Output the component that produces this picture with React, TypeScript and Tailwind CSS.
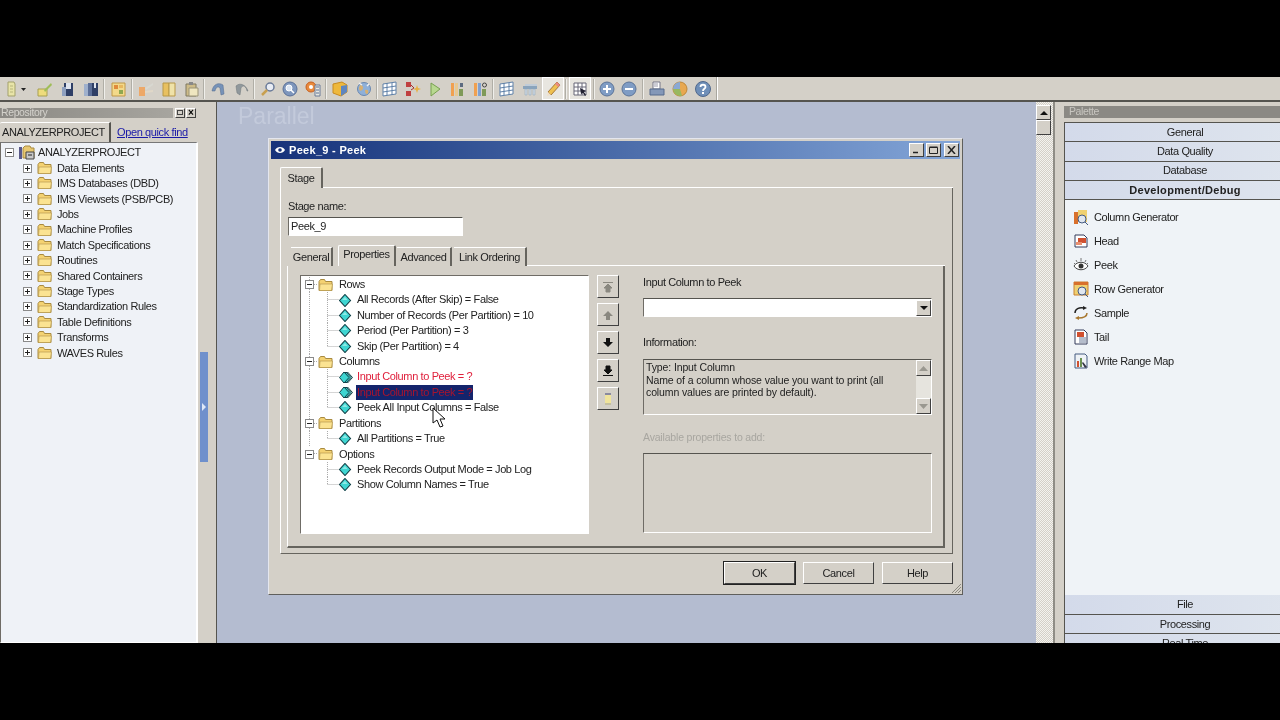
import type { ReactNode } from 'react';

const raised = 'border border-t-white border-l-white border-b-[#404040] border-r-[#404040]';
const sunken = 'border border-t-[#6f6c66] border-l-[#6f6c66] border-b-white border-r-white';

function Svg({ children, w = 16, h = 16 }: { children: ReactNode; w?: number; h?: number }) {
  return (
    <svg width={w} height={h} viewBox={`0 0 ${w} ${h}`} className="shrink-0">
      {children}
    </svg>
  );
}

// toolbar icons, all 16x16
const icons: Record<string, ReactNode> = {
  doc: (
    <>
      <path d="M5 1h6l1 2v12H5z" fill="#e8e4a8" stroke="#a3a16c" />
      <path d="M7 5h3M7 8h3M7 11h3" stroke="#b8b67c" />
    </>
  ),
  arrow: <path d="M1 7h5l-2.500 3z" fill="#222" />,
  pen: (
    <>
      <path d="M1 8h9v7H1z" fill="#eedc7c" stroke="#a8a050" />
      <path d="M7 9l7-7 1 2-7 7z" fill="#9fbd58" />
    </>
  ),
  save: (
    <>
      <path d="M4 2h9v13H4z" fill="#2f3f66" />
      <path d="M6 2h5v6H6z" fill="#dfe4ee" />
      <path d="M2 6h4v9H2z" fill="#8ea0c0" />
    </>
  ),
  saveall: (
    <>
      <path d="M1 3h5v12H1z" fill="#9fb0cc" />
      <path d="M5 2h4v13H5z" fill="#5c6f98" />
      <path d="M9 2h6v13H9z" fill="#2f3f66" />
      <path d="M11 2h2v5h-2z" fill="#dfe4ee" />
    </>
  ),
  grid: (
    <>
      <path d="M2 2h13v13H2z" fill="#f3d98a" stroke="#c09848" />
      <path d="M4 4h4v4H4z" fill="#e08a3c" />
      <path d="M9 9h4v4H9z" fill="#8fa850" />
      <path d="M9 4h4v3H9z" fill="#e8b860" />
    </>
  ),
  cut: (
    <>
      <path d="M1 6h6v9H1z" fill="#eda868" />
      <path d="M7 7l8-5v2l-7 5z" fill="#d8d8d0" />
      <path d="M7 10l8-1v2l-8 1z" fill="#e0d8c8" />
    </>
  ),
  copy: (
    <>
      <path d="M2 2h6v13H2z" fill="#e8c060" stroke="#b89848" />
      <path d="M8 2h6v13H8z" fill="#efe2a8" stroke="#b89848" />
    </>
  ),
  paste: (
    <>
      <path d="M3 3h10v12H3z" fill="#cdbb88" stroke="#7f7860" />
      <path d="M6 1h4v3H6z" fill="#888" />
      <path d="M6 7h9v8H6z" fill="#efe6c0" stroke="#9b9478" />
    </>
  ),
  undo: <path d="M2 10C3 3 9 1 13 4l1 9-3 1-1-7C8 5 6 6 5 10z" fill="#7692b8" stroke="#50688c" strokeWidth="0.500" />,
  redo: <path d="M14 10C13 4 9 4 8 7l-1 7-3-2-1-7c4-4 10-1 12 5z" fill="#90989c" stroke="#6c7478" strokeWidth="0.500" />,
  find: (
    <>
      <circle cx="10" cy="6" r="4" fill="#e8ecf4" stroke="#6a7a98" strokeWidth="1.500" />
      <path d="M7 9l-5 5" stroke="#c8a050" strokeWidth="2.500" />
    </>
  ),
  search: (
    <>
      <circle cx="8" cy="8" r="7" fill="#7e96bc" stroke="#5a7098" />
      <circle cx="7" cy="7" r="3" fill="#dce6f4" stroke="#fff" />
      <path d="M9 9l3 3" stroke="#fff" strokeWidth="1.500" />
    </>
  ),
  run: (
    <>
      <circle cx="6" cy="6" r="5" fill="#e88a3c" stroke="#c86020" />
      <circle cx="6" cy="6" r="2" fill="#fff" />
      <path d="M10 4h5v11h-5z" fill="#e8e8e0" stroke="#6a7a98" />
      <path d="M11 6h3M11 9h3M11 12h3" stroke="#5a7098" />
    </>
  ),
  folderbook: (
    <>
      <path d="M1 3l9-2 5 3v7l-6 4-8-3z" fill="#eeb83c" stroke="#c88a20" />
      <path d="M9 5l6-1v7l-6 4z" fill="#5e86c0" />
    </>
  ),
  globe: (
    <>
      <circle cx="8" cy="8" r="6.500" fill="#8fb0d8" stroke="#6a88b0" />
      <path d="M4 4c3 0 4 3 2 5s-3 0-3-2zM9 9c3-1 4 1 3 3s-3 1-3-3z" fill="#d8b070" />
      <path d="M3 2l3 2M13 3l-2 2" stroke="#f0f0f0" strokeWidth="1.500" />
    </>
  ),
  flow: (
    <>
      <path d="M1 1h5v5H1zM1 10h5v5H1z" fill="#c04040" />
      <path d="M6 4l3 3-3 2" stroke="#a03030" fill="none" />
      <path d="M12 4l1 3 3 1-3 1-1 3-1-3-3-1 3-1z" fill="#e8b040" />
    </>
  ),
  play: <path d="M4 2l9 6-9 7z" fill="#b8d890" stroke="#78a050" />,
  book1: (
    <>
      <path d="M2 2h3v13H2z" fill="#f0a050" />
      <path d="M6 2h3v13H6z" fill="#e8c890" />
      <path d="M10 8h4v7h-4z" fill="#7f9a58" />
      <path d="M11 2h3v4h-3z" fill="#5c6a80" />
    </>
  ),
  book2: (
    <>
      <path d="M2 2h3v13H2z" fill="#f0a050" />
      <path d="M6 2h3v13H6z" fill="#80a0d0" />
      <path d="M10 8h4v7h-4z" fill="#7f9a58" />
      <circle cx="12.500" cy="4" r="2" fill="none" stroke="#444" />
    </>
  ),
  tablegrid: (
    <>
      <path d="M1 3l13-2v12L1 15z" fill="#fff" stroke="#5e80a8" />
      <path d="M1 7l13-2M1 11l13-2M5 2v12M10 2v12" stroke="#5e80a8" />
    </>
  ),
  rows: (
    <>
      <path d="M1 5h14v3H1z" fill="#8aa4bc" />
      <path d="M3 8h2v6H3zM7 8h2v6H7zM11 8h2v6h-2z" fill="#d0d8e0" stroke="#8aa4bc" strokeWidth="0.500" />
      <path d="M3 3h12v2H3z" fill="#c0ccd8" />
    </>
  ),
  pencil: (
    <>
      <path d="M12 1l3 3-9 10-3-3z" fill="#eec050" stroke="#a87838" />
      <path d="M12 1l3 3-2 2-3-3z" fill="#ea8a80" />
      <path d="M3 11l3 3-4 1z" fill="#f0e0c8" />
    </>
  ),
  select: (
    <>
      <path d="M2 2h12v12H2z" fill="#fff" stroke="#667" />
      <path d="M2 6h12M2 10h12M6 2v12M10 2v12" stroke="#667" />
      <path d="M8 7l6 3-2 1 2 3-1 1-2-3-2 1z" fill="#223" />
    </>
  ),
  plus: (
    <>
      <circle cx="8" cy="8" r="7" fill="#7f9cc4" stroke="#5c7498" />
      <path d="M4 8h8M8 4v8" stroke="#fff" strokeWidth="2" />
    </>
  ),
  minus: (
    <>
      <circle cx="8" cy="8" r="7" fill="#7f9cc4" stroke="#5c7498" />
      <path d="M4 8h8" stroke="#fff" strokeWidth="2" />
    </>
  ),
  print: (
    <>
      <path d="M4 1h7v7H4z" fill="#fff" stroke="#778" />
      <path d="M1 8h14v6H1z" fill="#8498b8" stroke="#566a8c" />
      <path d="M5 3h4M5 5h4" stroke="#99a" />
    </>
  ),
  pie: (
    <>
      <circle cx="8" cy="8" r="7" fill="#e8a850" stroke="#c08838" />
      <path d="M8 8V1a7 7 0 0 0-7 7z" fill="#8aa8d4" />
      <path d="M8 8H1a7 7 0 0 0 9 6.700z" fill="#98b860" />
    </>
  ),
  help: (
    <>
      <circle cx="8" cy="8" r="7.500" fill="#6f8fb8" stroke="#50688c" />
      <path d="M5.500 6c0-3 5-3 5 0 0 2-2.500 1.500-2.500 4" stroke="#fff" strokeWidth="1.800" fill="none" />
      <path d="M7 11h2v2H7z" fill="#fff" />
    </>
  ),
};

const tools: { icon?: string; w: string; pressed?: boolean }[] = [
  { icon: 'doc', w: 'w-[22px]' },
  { icon: 'arrow', w: 'w-[12px]' },
  { icon: 'pen', w: 'w-[22px]' },
  { icon: 'save', w: 'w-[23px]' },
  { icon: 'saveall', w: 'w-[23px]' },
  { w: 'w-[4px]' },
  { icon: 'grid', w: 'w-[24px]' },
  { w: 'w-[4px]' },
  { icon: 'cut', w: 'w-[24px]' },
  { icon: 'copy', w: 'w-[22px]' },
  { icon: 'paste', w: 'w-[22px]' },
  { w: 'w-[4px]' },
  { icon: 'undo', w: 'w-[24px]' },
  { icon: 'redo', w: 'w-[22px]' },
  { w: 'w-[4px]' },
  { icon: 'find', w: 'w-[23px]' },
  { icon: 'search', w: 'w-[22px]' },
  { icon: 'run', w: 'w-[23px]' },
  { w: 'w-[4px]' },
  { icon: 'folderbook', w: 'w-[24px]' },
  { icon: 'globe', w: 'w-[23px]' },
  { w: 'w-[4px]' },
  { icon: 'tablegrid', w: 'w-[22px]' },
  { icon: 'flow', w: 'w-[23px]' },
  { icon: 'play', w: 'w-[22px]' },
  { icon: 'book1', w: 'w-[22px]' },
  { icon: 'book2', w: 'w-[23px]' },
  { w: 'w-[4px]' },
  { icon: 'tablegrid', w: 'w-[23px]' },
  { icon: 'rows', w: 'w-[23px]' },
  { icon: 'pencil', w: 'w-[23px]', pressed: true },
  { w: 'w-[4px]' },
  { icon: 'select', w: 'w-[24px]', pressed: true },
  { w: 'w-[4px]' },
  { icon: 'plus', w: 'w-[22px]' },
  { icon: 'minus', w: 'w-[22px]' },
  { w: 'w-[5px]' },
  { icon: 'print', w: 'w-[23px]' },
  { icon: 'pie', w: 'w-[23px]' },
  { icon: 'help', w: 'w-[23px]' },
];

function Toolbar() {
  return (
    <div className="flex h-[25px] shrink-0 items-center border-b-2 border-b-[#55544f] bg-[#d4d0c8]">
      {tools.map((t, i) => (
        <div key={i} className={`flex h-[23px] shrink-0 items-center justify-center ${t.w}`}>
          {t.icon ? (
            <div
              className={
                t.pressed
                  ? 'flex h-[23px] w-[22px] items-center justify-center border border-white bg-[#e8e6e0]'
                  : 'flex items-center justify-center'
              }
            >
              <Svg>{icons[t.icon]}</Svg>
            </div>
          ) : (
            <div className="h-[20px] w-[2px] border-l border-l-[#b0aea6] border-r border-r-[#f0efeb]" />
          )}
        </div>
      ))}
      <div className="ml-[2px] h-[23px] w-[2px] border-r border-r-white bg-[#a8a69e]" />
    </div>
  );
}

function Folder() {
  return (
    <Svg w={16} h={14}>
      <path d="M1 3.500 2.500 1.500h4l1 2H14v9H1z" fill="#f4d272" stroke="#a88a40" />
      <path d="M2 6h12.500l-1 6.500H1.500z" fill="#fbe392" stroke="#b89a50" strokeWidth="0.700" />
    </Svg>
  );
}

function Expander({ open }: { open?: boolean }) {
  return (
    <svg width="9" height="9" viewBox="0 0 9 9" className="shrink-0">
      <rect x="0.500" y="0.500" width="8" height="8" fill="#fff" stroke="#8a8a8a" />
      <path d="M2 4.500h5" stroke="#222" />
      {!open && <path d="M4.500 2v5" stroke="#222" />}
    </svg>
  );
}

const repoItems = [
  'Data Elements',
  'IMS Databases (DBD)',
  'IMS Viewsets (PSB/PCB)',
  'Jobs',
  'Machine Profiles',
  'Match Specifications',
  'Routines',
  'Shared Containers',
  'Stage Types',
  'Standardization Rules',
  'Table Definitions',
  'Transforms',
  'WAVES Rules',
];

function RepositoryPanel() {
  return (
    <div className="flex w-[198px] shrink-0 flex-col pt-[5px]">
      <div className="flex h-[11px] items-center pr-[2px]">
        <div className="flex h-[10px] w-[184px] items-center bg-gradient-to-r from-[#8b8984] to-[#a7a59f] pl-[1px] text-[10.500px] text-[#d4d2cc]">
          Repository
        </div>
        <div className={`ml-[2px] flex h-[10px] w-[10px] items-center justify-center bg-[#d4d0c8] ${raised}`}>
          <div className="h-[5px] w-[6px] border border-[#444]" />
        </div>
        <div className={`ml-[1px] flex h-[10px] w-[11px] items-center justify-center bg-[#d4d0c8] text-[10px] font-bold leading-none text-black ${raised}`}>
          ×
        </div>
      </div>
      <div className="mt-[3px] flex h-[21px] items-end">
        <div className="flex h-[20px] w-[111px] items-center rounded-tl-[2px] border-t border-t-white border-r-2 border-r-[#55544f] pl-[2px] text-[#222]">
          ANALYZERPROJECT
        </div>
        <a className="ml-[6px] pb-[2px] text-[#1a1aa8] underline">Open quick find</a>
      </div>
      <div className={`flex-1 bg-[#eff2f7] pt-[2px] ${sunken} border-t-[#777] border-r-2 border-r-[#888]`}>
        <div className="flex h-[15.400px] items-center pl-[4px] text-[#222]">
          <Expander open />
          <div className="ml-[4px]">
            <Svg w={18} h={15}>
              <path d="M1 2h3v12H1z" fill="#5a5a8a" />
              <path d="M5 3 7 1h5l1 2h3v10H5z" fill="#e8c870" stroke="#a88a40" />
              <path d="M8 7h8v7H8z" fill="#c8c8c8" stroke="#444" />
              <path d="M10 10h4" stroke="#222" />
            </Svg>
          </div>
          <span className="ml-[2px]">ANALYZERPROJECT</span>
        </div>
        {repoItems.map((name) => (
          <div key={name} className="flex h-[15.400px] items-center pl-[22px] text-[#222]">
            <Expander />
            <div className="ml-[5px]">
              <Folder />
            </div>
            <span className="ml-[4px]">{name}</span>
          </div>
        ))}
      </div>
    </div>
  );
}

function Diamond({ multi }: { multi?: boolean }) {
  if (multi) {
    return (
      <Svg w={14} h={13}>
        <path d="M8.500 1l5 5.500-5 5.500-5-5.500z" fill="#eaffff" stroke="#0d3d44" />
        <path d="M7 1l5 5.500-5 5.500-5-5.500z" fill="#3fd6d2" stroke="#0d3d44" />
        <path d="M5 1l5 5.500-5 5.500-4.500-5.500z" fill="#3fd6d2" stroke="#0d3d44" />
      </Svg>
    );
  }
  return (
    <Svg w={14} h={13}>
      <path d="M6 .5l5.500 6L6 12.500.5 6.500z" fill="#3fd6d2" stroke="#0d3d44" strokeWidth="1.100" />
      <path d="M3 6 6 3l2.500 3z" fill="#8eeae6" />
    </Svg>
  );
}

type PropRow = { label: string; group?: boolean; red?: boolean; selected?: boolean; multi?: boolean; last?: boolean };

const propRows: PropRow[] = [
  { label: 'Rows', group: true },
  { label: 'All Records (After Skip) = False' },
  { label: 'Number of Records (Per Partition) = 10' },
  { label: 'Period (Per Partition) = 3' },
  { label: 'Skip (Per Partition) = 4', last: true },
  { label: 'Columns', group: true },
  { label: 'Input Column to Peek = ?', red: true, multi: true },
  { label: 'Input Column to Peek = ?', red: true, multi: true, selected: true },
  { label: 'Peek All Input Columns = False', last: true },
  { label: 'Partitions', group: true },
  { label: 'All Partitions = True', last: true },
  { label: 'Options', group: true },
  { label: 'Peek Records Output Mode = Job Log' },
  { label: 'Show Column Names = True', last: true },
];

// gutter with the dotted tree lines for one property row
function Gutter({ row, index }: { row: PropRow; index: number }) {
  const trunk = index < propRows.length - 3;
  return (
    <svg width="38" height="15.400" viewBox="0 0 38 15.400" className="absolute left-0 top-0">
      {trunk && <path d="M8.500 0v16" stroke="#aaa" strokeDasharray="1 1" />}
      {row.group && <path d="M13 7.500h4" stroke="#aaa" strokeDasharray="1 1" />}
      {!row.group && (
        <>
          <path d={row.last ? 'M26.500 0v7.500' : 'M26.500 0v16'} stroke="#aaa" strokeDasharray="1 1" />
          <path d="M26.500 7.500h11" stroke="#aaa" strokeDasharray="1 1" />
        </>
      )}
    </svg>
  );
}

function PropertyTree() {
  return (
    <div className={`relative h-[259px] w-[289px] shrink-0 bg-white pt-[1px] ${sunken}`}>
      {propRows.map((row, i) => (
        <div key={i} className="relative flex h-[15.400px] items-center pl-[4px]">
          <Gutter row={row} index={i} />
          {row.group ? (
            <div className="relative flex items-center">
              <Expander open />
              <div className="ml-[4px]">
                <Folder />
              </div>
              <span className="ml-[5px] text-[#222]">{row.label}</span>
            </div>
          ) : (
            <div className="relative ml-[34px] flex items-center">
              <Diamond multi={row.multi} />
              <span
                className={`ml-[3px] pl-[1px] pr-[1px] leading-[15.400px] ${
                  row.selected ? 'bg-[#14246c] text-[#a8142e]' : row.red ? 'text-[#e0203c]' : 'text-[#222]'
                }`}
              >
                {row.label}
              </span>
            </div>
          )}
        </div>
      ))}
    </div>
  );
}

function MoveButton({ kind }: { kind: string }) {
  const dark = kind === 'down' || kind === 'bottom';
  const fill = dark ? '#111' : '#8a8880';
  return (
    <div className={`flex h-[23px] w-[22px] items-center justify-center bg-[#d4d0c8] ${raised} border-b-[#777] border-r-[#777]`}>
      <Svg w={12} h={12}>
        {kind === 'top' && <path d="M1 1.500h10M6 3l4 4H8v4H4V7H2z" stroke={fill} fill={fill} />}
        {kind === 'up' && <path d="M6 2l5 5H8v4H4V7H1z" fill={fill} />}
        {kind === 'down' && <path d="M6 10 1 5h3V1h4v4h3z" fill={fill} />}
        {kind === 'bottom' && <path d="M6 9 2 5h2V1h4v4h2zM1 10.500h10" stroke={fill} fill={fill} />}
        {kind === 'new' && (
          <>
            <path d="M3 0h6v2H3z" fill="#8a8aa0" />
            <path d="M3 2h6v8H3z" fill="#f0e49c" />
            <path d="M3 10h6v2H3z" fill="#c4c0a0" />
          </>
        )}
      </Svg>
    </div>
  );
}

function ScrollArrow({ up }: { up?: boolean }) {
  return (
    <div className={`flex h-[16px] w-[15px] items-center justify-center bg-[#d4d0c8] ${raised} border-b-[#777] border-r-[#777]`}>
      <svg width="9" height="5" viewBox="0 0 9 5">
        <path d={up ? 'M4.500 0 9 5H0z' : 'M4.500 5 9 0H0z'} fill="#9a9890" />
      </svg>
    </div>
  );
}

function RightFields() {
  return (
    <div className="ml-[24px] flex w-[289px] shrink-0 flex-col">
      <div className="h-[14px] leading-[14px] text-[#222]">Input Column to Peek</div>
      <div className={`mt-[9px] flex h-[19px] items-center justify-end bg-white ${sunken} border-t-[#55544f]`}>
        <div className={`flex h-[16px] w-[15px] items-center justify-center bg-[#d4d0c8] ${raised}`}>
          <svg width="8" height="4" viewBox="0 0 8 4">
            <path d="M0 0h8L4 4z" fill="#111" />
          </svg>
        </div>
      </div>
      <div className="mt-[18px] h-[15px] leading-[15px] text-[#222]">Information:</div>
      <div className={`mt-[9px] flex h-[56px] bg-[#d4d0c8] ${sunken} border-t-[#55544f]`}>
        <div className="flex-1 pl-[2px] pt-[1px] text-[10.500px] leading-[12.500px] tracking-[-0.12px] text-[#222]">
          Type: Input Column
          <br />
          Name of a column whose value you want to print (all
          <br />
          column values are printed by default).
        </div>
        <div className="flex w-[15px] shrink-0 flex-col justify-between bg-[#e6e4de]">
          <ScrollArrow up />
          <ScrollArrow />
        </div>
      </div>
      <div className="mt-[15px] h-[15px] text-[10.500px] leading-[15px] tracking-[-0.18px] text-[#a8a6a0]">Available properties to add:</div>
      <div className={`mt-[8px] h-[80px] bg-[#d4d0c8] ${sunken} border-t-[#55544f]`} />
    </div>
  );
}

function TabLabel({ children, active, className }: { children: ReactNode; active?: boolean; className: string }) {
  return (
    <div
      className={`flex items-center justify-center border-r-2 border-r-[#66645e] text-[#222] ${className} ${
        active ? 'h-[21px] rounded-t-[2px] border-t border-l border-t-white border-l-white pb-[3px]' : 'h-[19px] border-t border-t-white'
      }`}
    >
      {children}
    </div>
  );
}

function DialogButton({ children, primary }: { children: ReactNode; primary?: boolean }) {
  return (
    <div
      className={`flex h-[22px] w-[71px] items-center justify-center bg-[#d4d0c8] text-[#222] ${raised} ${
        primary ? 'outline outline-1 outline-[#222]' : 'border-b-[#66645e] border-r-[#66645e]'
      }`}
    >
      {children}
    </div>
  );
}

function WindowButton({ kind }: { kind: string }) {
  return (
    <div className={`flex h-[14px] w-[15px] items-center justify-center bg-[#d4d0c8] ${raised} border-b-[#66645e] border-r-[#66645e]`}>
      <svg width="9" height="8" viewBox="0 0 9 8">
        {kind === 'min' && <path d="M1 6.500h5" stroke="#222" strokeWidth="1.500" />}
        {kind === 'max' && <path d="M.5 1.500h8v6h-8zM.5 1h8" stroke="#222" fill="none" />}
        {kind === 'close' && <path d="M1 0l7 8M8 0 1 8" stroke="#222" strokeWidth="1.500" />}
      </svg>
    </div>
  );
}

function PeekDialog() {
  return (
    <div className="absolute left-[51px] top-[36px] flex h-[457px] w-[695px] flex-col border border-t-[#e4e6ee] border-l-[#e4e6ee] border-b-[#5f5f5c] border-r-[#5f5f5c] bg-[#d4d0c8] p-[2px]">
      <div className="flex h-[18px] shrink-0 items-center bg-gradient-to-r from-[#17327a] to-[#84a6d8] pl-[3px] pr-[1px]">
        <svg width="12" height="10" viewBox="0 0 12 10" className="shrink-0">
          <path d="M1 5c2-4 8-4 10 0-2 4-8 4-10 0z" fill="#fff" />
          <circle cx="6" cy="5" r="1.800" fill="#17327a" />
        </svg>
        <span className="ml-[3px] font-bold tracking-[0.3px] text-white">Peek_9 - Peek</span>
        <div className="ml-auto flex">
          <WindowButton kind="min" />
          <div className="ml-[2px]">
            <WindowButton kind="max" />
          </div>
          <div className="ml-[3px]">
            <WindowButton kind="close" />
          </div>
        </div>
      </div>
      <div className="flex flex-1 flex-col bg-[#d4d0c8] pl-[9px] pr-[7px] pt-[8px]">
        <div className="flex h-[21px] shrink-0">
          <div className="flex h-[21px] w-[43px] items-center justify-center rounded-t-[2px] border-l border-t border-l-white border-t-white border-r-2 border-r-[#66645e] text-[#222]">
            Stage
          </div>
          <div className="flex-1 border-b border-b-white" />
        </div>
        <div className="flex h-[366px] shrink-0 flex-col border-b border-r border-l border-b-[#66645e] border-r-[#66645e] border-l-white pl-[6px] pr-[7px] pt-[11px]">
          <div className="h-[14px] pl-[1px] leading-[14px] text-[#222]">Stage name:</div>
          <div className={`ml-[1px] mt-[4px] flex h-[19px] w-[175px] items-center bg-white pl-[2px] text-[#222] ${sunken} border-t-[#55544f]`}>
            Peek_9
          </div>
          <div className="mt-[9px] flex h-[21px] shrink-0 items-end pl-[1px]">
            <div className="h-[19px] w-[3px]" />
            <TabLabel className="w-[42px]">General</TabLabel>
            <TabLabel active className="ml-[5px] w-[58px]">
              Properties
            </TabLabel>
            <TabLabel className="ml-[1px] w-[55px]">Advanced</TabLabel>
            <TabLabel className="ml-[2px] w-[73px]">Link Ordering</TabLabel>
            <div className="h-[1px] flex-1 bg-white" />
          </div>
          <div className="flex h-[282px] shrink-0 border-b-2 border-r-2 border-l border-b-[#66645e] border-r-[#66645e] border-l-white pl-[12px] pt-[9px]">
            <PropertyTree />
            <div className="ml-[8px] flex w-[22px] shrink-0 flex-col gap-[5px]">
              {['top', 'up', 'down', 'bottom', 'new'].map((k) => (
                <MoveButton key={k} kind={k} />
              ))}
            </div>
            <div>
              <RightFields />
            </div>
          </div>
        </div>
        <div className="mt-[8px] flex justify-end gap-[8px]">
          <DialogButton primary>OK</DialogButton>
          <DialogButton>Cancel</DialogButton>
          <DialogButton>Help</DialogButton>
        </div>
      </div>
      <svg width="11" height="11" viewBox="0 0 11 11" className="absolute bottom-0 right-0">
        <path d="M10 1 1 10M10 4 4 10M10 7l-3 3" stroke="#8a8880" />
      </svg>
      {/* mouse pointer over the tree */}
      <svg width="14" height="21" viewBox="0 0 14 21" className="absolute left-[163px] top-[268px]">
        <path d="M1 1v15l4-3 3 7 3-1-3-7h5z" fill="#fff" stroke="#111" />
      </svg>
    </div>
  );
}

function Splitter() {
  return (
    <div className="w-[19px] shrink-0 border-r border-r-[#55544f] pl-[2px] pt-[250px]">
      <div className="flex h-[110px] w-[8px] items-center justify-center bg-[#6f90cc]">
        <svg width="4" height="8" viewBox="0 0 4 8">
          <path d="M0 0l4 4-4 4z" fill="#dfe8f8" />
        </svg>
      </div>
    </div>
  );
}

function Canvas() {
  return (
    <div className="relative w-[819px] shrink-0 bg-[#b4bcd0]">
      <div className="pl-[21px] pt-[1px] text-[23px] leading-[26px] tracking-normal text-[#c3cadb]">Parallel</div>
      <PeekDialog />
    </div>
  );
}

function VerticalScroll() {
  return (
    <div className="w-[17px] shrink-0 bg-[repeating-conic-gradient(#d4d0c8_0_25%,#f4f3ef_0_50%)] bg-[length:2px_2px] pt-[3px]">
      <div className={`flex h-[15px] w-[15px] items-center justify-center bg-[#d4d0c8] ${raised} border-b-[#777] border-r-[#777]`}>
        <svg width="8" height="4" viewBox="0 0 8 4">
          <path d="M4 0l4 4H0z" fill="#111" />
        </svg>
      </div>
      <div className={`h-[15px] w-[15px] bg-[#d4d0c8] ${raised} border-b-[#777] border-r-[#777]`} />
    </div>
  );
}

const paletteIcons: Record<string, ReactNode> = {
  'Column Generator': (
    <>
      <path d="M1 3h4v12H1z" fill="#d8702c" />
      <path d="M5 1h9v12H5z" fill="#efd070" />
      <circle cx="9" cy="10" r="4" fill="#dfe6f0" stroke="#445a80" />
      <path d="M12 13l3 3" stroke="#445a80" />
    </>
  ),
  Head: (
    <>
      <path d="M2 2h9l3 3v9H2z" fill="#fff" stroke="#333a5a" />
      <path d="M5 5h8v5H5z" fill="#d05030" />
      <path d="M3 9h6v3H3z" fill="#e89070" />
    </>
  ),
  Peek: (
    <>
      <path d="M1 9c3-5 11-5 14 0-3 5-11 5-14 0z" fill="#fff" stroke="#444" />
      <circle cx="8" cy="9" r="2.500" fill="#333" />
      <path d="M3 3l1 2M8 1v3M13 3l-1 2M1 6l1 1M15 6l-1 1" stroke="#777" />
    </>
  ),
  'Row Generator': (
    <>
      <path d="M1 1h14v13H1z" fill="#efd070" stroke="#c88030" />
      <path d="M1 1h14v3H1z" fill="#d8702c" />
      <circle cx="9" cy="10" r="4" fill="#dfe6f0" stroke="#445a80" />
      <path d="M12 13l3 3" stroke="#445a80" />
    </>
  ),
  Sample: (
    <>
      <path d="M2 8c0-4 4-6 9-5" stroke="#222" strokeWidth="1.500" fill="none" />
      <path d="M10 1l4 2-4 2z" fill="#222" />
      <path d="M14 8c0 4-4 5-9 5" stroke="#a87830" strokeWidth="1.500" fill="none" />
      <path d="M6 11l-4 2 4 2z" fill="#a87830" />
    </>
  ),
  Tail: (
    <>
      <path d="M2 1h9l3 3v11H2z" fill="#fff" stroke="#333a5a" />
      <path d="M4 3h7v5H4z" fill="#d05030" />
      <path d="M6 9h7M6 11h7M6 13h7" stroke="#6a7a98" />
    </>
  ),
  'Write Range Map': (
    <>
      <path d="M2 1h10l2 2v12H2z" fill="#eef2f6" stroke="#445a80" />
      <path d="M4 8h2v6H4z" fill="#d05030" />
      <path d="M7 5h2v9H7z" fill="#6a9050" />
      <path d="M10 9l4 5-2 1-3-5z" fill="#334" />
    </>
  ),
};

function PaletteTab({ children, bold }: { children: ReactNode; bold?: boolean }) {
  return (
    <div
      className={`flex h-[19.300px] w-[240px] shrink-0 items-center justify-center border-b border-b-[#55544f] bg-gradient-to-r from-[#d3daea] to-[#dfe5ee] text-[#222] ${
        bold ? 'font-bold tracking-[0.3px]' : ''
      }`}
    >
      {children}
    </div>
  );
}

function Palette() {
  return (
    <div className="flex min-w-0 flex-1 flex-col overflow-hidden border-l-2 border-l-[#8f8d86] pl-[9px] pt-[4px]">
      <div className="flex h-[12px] shrink-0 items-center bg-[#8b8984] pl-[5px] text-[10.500px] text-[#c8c6c0]">Palette</div>
      <div className="mt-[4px] flex flex-1 flex-col overflow-hidden border-l border-l-[#55544f] bg-[#eff3f7]">
        <div className="border-t border-t-[#55544f]" />
        <PaletteTab>General</PaletteTab>
        <PaletteTab>Data Quality</PaletteTab>
        <PaletteTab>Database</PaletteTab>
        <PaletteTab bold>Development/Debug</PaletteTab>
        <div className="flex flex-1 flex-col pl-[8px] pt-[5px]">
          {Object.keys(paletteIcons).map((name) => (
            <div key={name} className="flex h-[24px] shrink-0 items-center text-[#222]">
              <Svg>{paletteIcons[name]}</Svg>
              <span className="ml-[5px]">{name}</span>
            </div>
          ))}
        </div>
        <PaletteTab>File</PaletteTab>
        <PaletteTab>Processing</PaletteTab>
        <div className="h-[9px] w-[240px] shrink-0 overflow-hidden bg-gradient-to-r from-[#d3daea] to-[#dfe5ee] text-center leading-[19px] text-[#222]">
          Real Time
        </div>
      </div>
    </div>
  );
}

export default function App() {
  return (
    <div className="flex h-[720px] w-[1280px] flex-col overflow-hidden bg-black font-['Liberation_Sans',Arial,sans-serif] text-[11px] tracking-[-0.38px] blur-[0.35px]">
      <div className="h-[77px] shrink-0" />
      <div className="flex h-[566px] shrink-0 flex-col bg-[#d4d0c8]">
        <Toolbar />
        <div className="flex min-h-0 flex-1">
          <RepositoryPanel />
          <Splitter />
          <Canvas />
          <VerticalScroll />
          <Palette />
        </div>
      </div>
    </div>
  );
}
